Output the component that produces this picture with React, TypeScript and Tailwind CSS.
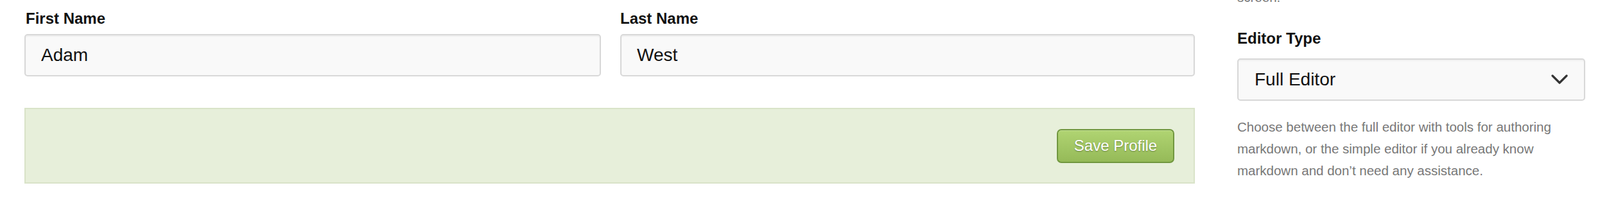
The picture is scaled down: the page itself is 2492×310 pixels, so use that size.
export default function App() {
  return (
    <div className="flex w-[2492px] h-[310px] overflow-hidden bg-white pl-[38px] font-['Liberation_Sans',Arial,sans-serif] text-[#111]">
      {/* Profile form */}
      <div className="w-[1823px] shrink-0 pt-[15px]">
        <div className="grid grid-cols-[898px_895px] gap-x-[30px]">
          <div>
            <label className="block pl-[2px] text-[24px] leading-[28px] font-bold">
              First Name
            </label>
            <input
              defaultValue="Adam"
              className="mt-[10px] block w-full h-[66px] px-[24px] rounded-[5px] border-2 border-[#d8d8d8] bg-[#f9f9f9] shadow-[inset_0_2px_2px_rgba(0,0,0,0.05)] text-[28px] text-[#111] outline-none font-['Liberation_Sans',Arial,sans-serif]"
            />
          </div>
          <div>
            <label className="block text-[24px] leading-[28px] font-bold">
              Last Name
            </label>
            <input
              defaultValue="West"
              className="mt-[10px] block w-full h-[66px] px-[24px] rounded-[5px] border-2 border-[#d8d8d8] bg-[#f9f9f9] shadow-[inset_0_2px_2px_rgba(0,0,0,0.05)] text-[28px] text-[#111] outline-none font-['Liberation_Sans',Arial,sans-serif]"
            />
          </div>
        </div>

        <div className="mt-[49px] h-[118px] flex items-center justify-end pr-[30px] border-2 border-[#d9e3c8] bg-[#e7efda]">
          <button className="h-[53px] w-[183px] rounded-[7px] border-2 border-[#71973f] bg-gradient-to-b from-[#b0d472] to-[#95ba58] text-white text-[24px] [text-shadow:0_1px_2px_rgba(0,0,0,0.35)] shadow-[inset_0_1px_0_rgba(255,255,255,0.25)]">
            Save Profile
          </button>
        </div>
      </div>

      {/* Sidebar */}
      <div className="ml-[66px] w-[542px] shrink-0">
        <p className="mt-[-21px] text-[20.5px] leading-[34px] text-[#777]">
          screen.
        </p>
        <label className="mt-[33px] block text-[24px] leading-[28px] font-bold">
          Editor Type
        </label>
        <div className="mt-[17px] h-[66px] flex items-center justify-between pl-[25px] pr-[25px] rounded-[5px] border-2 border-[#d8d8d8] bg-[#f9f9f9] shadow-[inset_0_2px_2px_rgba(0,0,0,0.04)]">
          <span className="text-[28px] text-[#111]">Full Editor</span>
          <svg width="26" height="16" viewBox="0 0 26 16" fill="none">
            <polyline
              points="2,2 13,13 24,2"
              stroke="#333"
              strokeWidth="3.2"
              strokeLinecap="round"
              strokeLinejoin="round"
            />
          </svg>
        </div>
        <p className="mt-[24px] text-[20.5px] leading-[34px] text-[#777]">
          Choose between the full editor with tools for authoring markdown, or
          the simple editor if you already know markdown and don’t need any
          assistance.
        </p>
      </div>
    </div>
  );
}
